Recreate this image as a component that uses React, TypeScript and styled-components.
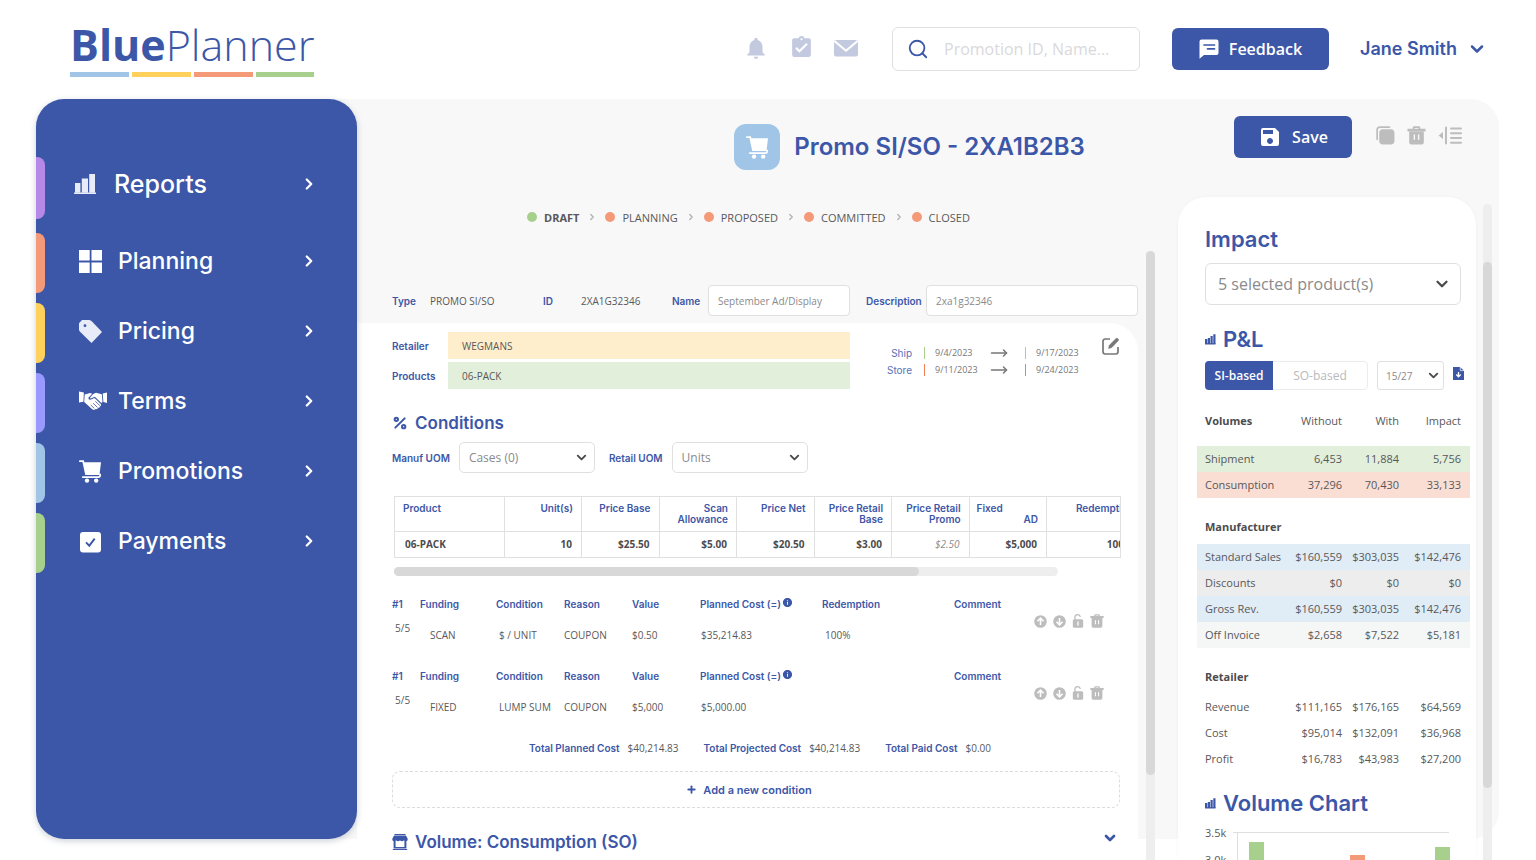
import React from "react";
import styled, { createGlobalStyle, css } from "styled-components";
import { ChevronDown, ChevronRight, MoveRight, Percent, Plus, Search } from "lucide-react";
import { MdAssignmentTurnedIn, MdInfo, MdNotifications, MdSave } from "react-icons/md";

const blue = "#3c57a7";
const ink = "#58585a";
const soft = "#8a8a8c";
const line = "#e0e0e0";
const heading = `Inter, "Liberation Sans", sans-serif`;
const body = `"Open Sans", "Noto Sans", sans-serif`;

const GlobalStyle = createGlobalStyle`
  *, *::before, *::after { box-sizing: border-box; }
  body { margin: 0; background: #fff; color: ${ink}; font-family: ${body}; overflow: hidden; }
  button, input, select { font: inherit; color: inherit; margin: 0; }
  button { border: 0; padding: 0; background: none; cursor: pointer; }
  h1, h2, h3, p, dl, dd { margin: 0; }
  svg { display: block; flex: none; }
`;

const Page = styled.div`
  display: flex;
  flex-direction: column;
  height: 100vh;
`;

/* ---------- header ---------- */

const Header = styled.header`
  display: flex;
  align-items: center;
  flex: none;
  height: 99px;
  padding: 0 49px 2px 70px;
`;

const Logo = styled.a`
  display: block;
  margin: 2px auto 0 0;
  color: ${blue};
  text-decoration: none;
  font-size: 43px;
  line-height: 46px;
  font-weight: 300;
  b { font-weight: 700; }
`;

const LogoBars = styled.span`
  display: grid;
  grid-template-columns: repeat(4, 1fr);
  gap: 3px;
  height: 5px;
  margin-top: 4px;
`;

const LogoBar = styled.span<{ $color: string }>`
  background: ${(p) => p.$color};
`;

const HeaderIcons = styled.nav`
  display: flex;
  align-items: center;
  gap: 20px;
  margin-right: 34px;
  padding-bottom: 2px;
  color: #c3cadf;
`;

const IconButton = styled.button`
  display: flex;
  align-items: center;
  justify-content: center;
  flex: none;
  color: inherit;
`;

const SearchBox = styled.label`
  display: flex;
  align-items: center;
  gap: 15px;
  width: 248px;
  height: 44px;
  margin-right: 32px;
  padding: 0 14px;
  border: 1px solid ${line};
  border-radius: 6px;
  color: ${blue};
  input {
    width: 100%;
    min-width: 0;
    border: 0;
    padding: 0;
    outline: 0;
    font-size: 16px;
    font-weight: 500;
  }
  input::placeholder { color: #d9d9db; opacity: 1; }
`;

const PrimaryButton = styled.button<{ $width: number }>`
  display: flex;
  align-items: center;
  justify-content: center;
  gap: 10px;
  width: ${(p) => p.$width}px;
  height: 42px;
  border-radius: 6px;
  background: ${blue};
  color: #fff;
  font-size: 16px;
  font-weight: 600;
`;

const UserButton = styled.button`
  display: flex;
  align-items: center;
  gap: 10px;
  margin-left: 31px;
  color: ${blue};
  font-family: ${heading};
  font-size: 18px;
  font-weight: 600;
`;

/* ---------- shell ---------- */

const Shell = styled.div`
  display: flex;
  flex: 1;
  min-height: 0;
  padding: 0 37px 0 36px;
`;

const Sidebar = styled.nav`
  position: relative;
  z-index: 1;
  flex: none;
  width: 321px;
  margin: 0 -28px 21px 0;
  padding-top: 58px;
  border-radius: 28px;
  background: ${blue};
  box-shadow: 0 2px 6px rgba(60, 70, 100, 0.25);
`;

const NavItem = styled.a<{ $tab: string; $lead?: boolean }>`
  position: relative;
  display: grid;
  grid-template-columns: ${(p) => (p.$lead ? 40 : 39)}px 1fr 18px;
  align-items: center;
  height: ${(p) => (p.$lead ? 62 : 60)}px;
  margin-bottom: ${(p) => (p.$lead ? 14 : 10)}px;
  padding: 0 39px ${(p) => (p.$lead ? 8 : 4)}px ${(p) => (p.$lead ? 38 : 43)}px;
  color: #fff;
  text-decoration: none;
  font-family: ${heading};
  font-size: ${(p) => (p.$lead ? 25 : 23)}px;
  font-weight: 500;
  &::before {
    content: "";
    position: absolute;
    inset: 0 auto 0 0;
    width: 9px;
    border-radius: 0 8px 8px 0;
    background: ${(p) => p.$tab};
  }
`;

const Workspace = styled.main`
  position: relative;
  display: flex;
  flex-direction: column;
  flex: 1;
  min-width: 0;
  padding-left: 28px;
  &::before {
    content: "";
    position: absolute;
    inset: 0 0 21px 0;
    z-index: -1;
    border-radius: 0 28px 28px 0;
    background: #f8f8f8;
  }
`;

const TitleBar = styled.div`
  display: grid;
  grid-template-columns: 1fr auto 1fr;
  align-items: start;
  flex: none;
  height: 98px;
  padding: 17px 37px 0 0;
`;

const Title = styled.h1`
  display: flex;
  grid-column: 2;
  align-items: center;
  gap: 14px;
  margin-top: 8px;
  color: ${blue};
  font-family: ${heading};
  font-size: 24px;
  font-weight: 600;
  line-height: 46px;
`;

const TitleBadge = styled.span`
  display: flex;
  align-items: center;
  justify-content: center;
  width: 46px;
  height: 46px;
  border-radius: 12px;
  background: #a0c5e6;
  color: #fff;
`;

const Actions = styled.div`
  display: flex;
  justify-content: flex-end;
  gap: 13px;
  color: #bdbdbd;
`;

const ActionIcons = styled.div`
  display: flex;
  align-items: center;
  gap: 12px;
  height: 38px;
  margin-left: 11px;
`;

const Columns = styled.div`
  display: flex;
  flex: 1;
  min-height: 0;
  padding-right: 7px;
`;

const Editor = styled.section`
  display: flex;
  flex-direction: column;
  flex: 1;
  min-width: 0;
  margin-right: 23px;
`;

const Steps = styled.ol`
  display: flex;
  align-items: center;
  justify-content: center;
  flex: none;
  gap: 8px;
  height: 40px;
  margin: 0 15px 14px 0;
  padding: 0;
  list-style: none;
  color: #b0b0b0;
`;

const Step = styled.li<{ $current?: boolean }>`
  display: flex;
  align-items: center;
  gap: 7px;
  color: ${ink};
  font-size: 11px;
  font-weight: ${(p) => (p.$current ? 700 : 400)};
  &::before {
    content: "";
    width: 10px;
    height: 10px;
    border-radius: 50%;
    background: ${(p) => (p.$current ? "#a7d08c" : "#f59a78")};
  }
`;

const ScrollPane = styled.div`
  display: flex;
  flex: 1;
  min-height: 0;
  gap: 8px;
`;

const ScrollContent = styled.div`
  flex: 1;
  min-width: 0;
  overflow: hidden;
`;

const Track = styled.div<{ $from: string; $size: string; $top?: number }>`
  flex: none;
  width: 9px;
  margin-top: ${(p) => p.$top ?? 0}px;
  padding-top: ${(p) => p.$from};
  border-radius: 5px 5px 0 0;
  background: #eee;
  &::before {
    content: "";
    display: block;
    height: ${(p) => p.$size};
    border-radius: 5px;
    background: #d8d8d8;
  }
`;

/* ---------- promotion form ---------- */

const labelText = css`
  color: ${blue};
  font-family: ${heading};
  font-size: 10px;
  font-weight: 600;
  line-height: 14px;
  white-space: nowrap;
`;

const FieldRow = styled.div`
  display: grid;
  grid-template-columns: 151px 129px 194px 1fr;
  align-items: center;
  height: 65px;
  padding: 34px 0 0 35px;
`;

const Field = styled.label<{ $label: number; $end?: number }>`
  display: grid;
  grid-template-columns: ${(p) => p.$label}px 1fr;
  align-items: center;
  padding-right: ${(p) => p.$end ?? 0}px;
  font-size: 10px;
  span { ${labelText} }
`;

const TextInput = styled.input`
  width: 100%;
  min-width: 0;
  height: 31px;
  padding: 0 9px;
  border: 1px solid ${line};
  border-radius: 4px;
  background: #fff;
  && { color: ${soft}; }
  font-size: 10px;
`;

const Card = styled.div`
  margin-top: 7px;
  padding: 9px 18px 0 35px;
  border-radius: 0 28px 0 0;
  background: #fff;
`;

const Summary = styled.div`
  display: flex;
  align-items: flex-start;
`;

const Scope = styled.dl`
  display: grid;
  grid-template-columns: 56px 1fr;
  grid-auto-rows: 27px;
  row-gap: 3px;
  align-items: center;
  flex: 1;
  max-width: 458px;
  dt { ${labelText} }
`;

const ScopeValue = styled.dd<{ $fill: string }>`
  height: 27px;
  padding-left: 14px;
  background: ${(p) => p.$fill};
  font-size: 10px;
  line-height: 29px;
`;

const Dates = styled.div`
  display: grid;
  grid-template-columns: 28px 54px 23px 54px;
  grid-auto-rows: 17px;
  align-items: center;
  column-gap: 12px;
  margin: 12px auto 0 34px;
  color: #77777a;
`;

const DateLabel = styled.span`
  color: #5871b8;
  font-family: ${heading};
  font-size: 10px;
  text-align: right;
`;

const DateValue = styled.span<{ $color: string }>`
  display: flex;
  align-items: center;
  gap: 10px;
  font-size: 9px;
  white-space: nowrap;
  &::before {
    content: "";
    flex: none;
    width: 1px;
    height: 12px;
    background: ${(p) => p.$color};
  }
`;

const EditButton = styled(IconButton)`
  margin: 5px 0 0;
  color: #77777a;
`;

const SectionTitle = styled.h2`
  display: flex;
  align-items: center;
  gap: 7px;
  height: 24px;
  margin-top: 22px;
  color: ${blue};
  font-family: ${heading};
  font-size: 17px;
  font-weight: 600;
  button { margin: 0 2px 8px auto; }
`;

const Units = styled.div`
  display: flex;
  align-items: center;
  margin-top: 7px;
`;

const UnitField = styled.label`
  display: flex;
  align-items: center;
  margin-right: 14px;
  gap: 9px;
  > span:first-child { ${labelText} }
`;

const SelectWrap = styled.span<{ $size: "s" | "m" | "l" }>`
  position: relative;
  display: block;
  select {
    appearance: none;
    display: block;
    width: ${(p) => ({ s: "67px", m: "136px", l: "100%" })[p.$size]};
    height: ${(p) => ({ s: 29, m: 31, l: 42 })[p.$size]}px;
    padding: 0 ${(p) => ({ s: 8, m: 9, l: 12 })[p.$size]}px;
    border: 1px solid ${line};
    border-radius: ${(p) => ({ s: 3, m: 5, l: 6 })[p.$size]}px;
    background: #fff;
    color: ${soft};
    font-size: ${(p) => ({ s: 10, m: 12, l: 16 })[p.$size]}px;
  }
  svg {
    position: absolute;
    right: ${(p) => ({ s: 3, m: 6, l: 10 })[p.$size]}px;
    top: 0;
    height: 100%;
    color: #4a4a4c;
    pointer-events: none;
  }
`;

const TableClip = styled.div`
  margin: 23px -1px 0 2px;
  border: 1px solid ${line};
  overflow: hidden;
`;

const ProductTable = styled.table`
  width: 100%;
  min-width: 748px;
  table-layout: fixed;
  border-collapse: collapse;
  th, td { border-right: 1px solid ${line}; text-align: right; padding: 0 9px; }
  th { ${labelText} height: 34px; padding: 6px 8px 0 4px; line-height: 11px; vertical-align: top; white-space: normal; }
  td { height: 26px; border-top: 1px solid ${line}; font-size: 10px; font-weight: 700; color: #4c4c4e; }
  th:first-child { text-align: left; padding-left: 8px; }
  td:first-child { text-align: left; padding-left: 10px; }
`;

const Muted = styled.i`
  color: ${soft};
  font-weight: 400;
`;

const SplitHead = styled.span`
  display: flex;
  flex-direction: column;
  span:first-child { padding-left: 3px; text-align: left; }
`;

const RowTrack = styled.div`
  width: 664px;
  max-width: 100%;
  height: 9px;
  margin: 9px 0 21px 2px;
  border-radius: 5px;
  background: #eee;
  &::before {
    content: "";
    display: block;
    width: 79%;
    height: 100%;
    border-radius: 5px;
    background: #d8d8d8;
  }
`;

const ConditionRow = styled.div`
  display: grid;
  grid-template-columns: 28px 76px 68px 68px 68px 122px 132px 80px auto;
  justify-content: start;
  height: 48px;
  margin-bottom: 24px;
`;

const Cell = styled.div<{ $indent?: number; $gap?: number }>`
  font-size: 10px;
  line-height: 18px;
  white-space: nowrap;
  h3 { ${labelText} display: flex; gap: 1px; margin-bottom: ${(p) => p.$gap ?? 15}px; }
  p { padding-left: ${(p) => p.$indent ?? 0}px; }
`;

const RowTools = styled.div`
  display: flex;
  align-items: center;
  gap: 6px;
  height: 14px;
  margin-top: 17px;
  color: #bdbdbd;
`;

const Totals = styled.dl`
  display: flex;
  height: 16px;
  margin: -1px 0 15px;
  padding-left: 137px;
  align-items: center;
  gap: 8px;
  font-size: 10px;
  dt { ${labelText} }
  dd { margin-right: 17px; }
`;

const AddButton = styled.button`
  display: flex;
  align-items: center;
  justify-content: center;
  gap: 6px;
  width: 100%;
  height: 37px;
  padding-right: 14px;
  border: 1px dashed #dcdcdc;
  border-radius: 8px;
  color: ${blue};
  font-family: ${heading};
  font-size: 11px;
  font-weight: 600;
`;

/* ---------- impact panel ---------- */

const Panel = styled.aside`
  flex: none;
  width: 298px;
  margin-right: 7px;
  padding: 28px 15px 0 27px;
  border-radius: 28px 28px 0 0;
  background: #fff;
  box-shadow: 0 0 4px rgba(0, 0, 0, 0.03);
  overflow: hidden;
`;

const PanelTitle = styled.h2<{ $top?: number; $bottom?: number }>`
  display: flex;
  align-items: center;
  gap: 7px;
  height: 28px;
  margin: ${(p) => p.$top ?? 0}px 0 ${(p) => p.$bottom ?? 0}px;
  color: ${blue};
  font-family: ${heading};
  font-size: 22px;
  font-weight: 600;
`;

const PanelControls = styled.div`
  display: flex;
  align-items: center;
  gap: 9px;
`;

const Toggle = styled.div`
  display: flex;
  flex: none;
  width: 163px;
  height: 29px;
  border: 1px solid #ececec;
  border-radius: 4px;
`;

const ToggleButton = styled.button<{ $on?: boolean }>`
  flex: 1;
  font-size: 12px;
  color: #b9b9bb;
  ${(p) =>
    p.$on &&
    css`
      flex: none;
      width: 68px;
      margin: -1px 0 -1px -1px;
      border-radius: 4px 0 0 4px;
      background: ${blue};
      color: #fff;
      font-weight: 600;
    `}
`;

const ImpactTable = styled.table`
  width: calc(100% + 17px);
  margin: 18px -9px 0 -8px;
  border-collapse: collapse;
  table-layout: fixed;
  font-size: 11px;
  line-height: 18px;
  th, td { height: 26px; padding: 0 9px 0 0; text-align: right; font-weight: 400; white-space: nowrap; }
  th:first-child { padding-left: 8px; text-align: left; }
  thead th { height: 38px; padding-top: 4px; vertical-align: top; }
  th[scope="rowgroup"] { height: 46px; padding-bottom: 8px; vertical-align: bottom; }
  th[scope="rowgroup"], thead th:first-child { color: #4c4c4e; font-weight: 700; }
`;

const ImpactRow = styled.tr<{ $fill?: string }>`
  background: ${(p) => p.$fill ?? "transparent"};
`;

/* ---------- icons ---------- */

const Bars = () => (
  <svg width="22" height="20" viewBox="0 0 22 20" fill="#e8ecf8">
    <path d="M1 9h5.400v9.700H1zM7.800 4.400H14v14.300H7.800zM15.200 0H21v18.700h-5.800z" />
    <path d="M0 18.500h22V20H0z" />
  </svg>
);

const MiniBars = () => (
  <svg width="11" height="11" viewBox="0 0 11 11" fill="currentColor">
    <path d="M0 5h2.300v5H0zM2.800 4H5v6H2.800zM5.500 2h2.200v8H5.500zM8.300.3h2.200V10H8.300z" />
    <path d="M0 9.200h10.500v1.300H0z" />
  </svg>
);

const Squares = () => (
  <svg width="23" height="23" viewBox="0 0 23 23" fill="currentColor">
    <path d="M0 0h10.700v10.500H0zM12.500 0H23v10.500H12.500zM0 12.500h10.700V23H0zM12.500 12.500H23V23H12.500z" />
  </svg>
);

const Tag = () => (
  <svg width="23" height="23" viewBox="0 0 23 23" fill="#e8ecf8" fillRule="evenodd">
    <path d="M3 0h7.500L12.500 1 23 12 12.500 23 .8 11.500 0 10V3.200zM6 4.300a1.400 1.400 0 1 0 0 2.800 1.400 1.400 0 0 0 0-2.800z" />
  </svg>
);

const Handshake = () => (
  <svg width="28" height="20" viewBox="0 0 28 20" fill="currentColor">
    <path d="M0 .6l4.900 1-.5 9.200L0 11.600zM28 1.600l-4.300 1 .7 8.400 3.600 1z" />
    <path d="M5.700 3.600L11 2l2.200.7-3.800 4.100q-.3 2.300 2.600 1.800l3.500-1.500 6.300 6q1 1.700-.7 2.100 0 1.500-1.900 1.500-.6 1.900-2.700 1.300-1.200 1.500-3 .4L8 13.500l-2.800-2.600z" />
    <path d="M14.200 2.900L17 1.800l5.800 1.500.7 7.800-1.200.9-6.500-6.300-4 1.700q-1 0-.7-1z" />
    <path d="M14 12.200l4.500 4.200M16.300 10.300l4.800 4.500M11.800 14l3.500 3.400" stroke={blue} strokeWidth=".8" />
  </svg>
);

const Cart = () => (
  <svg width="23" height="23" viewBox="0 0 23 23" fill="currentColor">
    <path d="M4.500 2.200H22l-1.300 10.600-1 1.200H7z" />
    <path d="M.9 1.200h3.300L7 14h12.500q2 0 1.700 1.600t-2 1.500H3.800" fill="none" stroke="currentColor" strokeWidth="1.800" strokeLinecap="round" />
    <circle cx="8" cy="20.600" r="2.200" />
    <circle cx="17.200" cy="20.600" r="2.200" />
  </svg>
);

const CheckSquare = () => (
  <svg width="23" height="23" viewBox="0 0 23 23">
    <rect x="1" y="2" width="21" height="20.500" rx="3" fill="#fff" />
    <path d="M7 12.300l3.300 3.400 5.400-7" fill="none" stroke={blue} strokeWidth="1.900" />
  </svg>
);

const Mail = () => (
  <svg width="24" height="18" viewBox="0 0 24 18">
    <rect y="1" width="24" height="16.500" rx="2" fill="currentColor" />
    <path d="M.5 2l11.500 9.700L23.500 2" fill="none" stroke="#fff" strokeWidth="2" />
  </svg>
);

const Chat = () => (
  <svg width="20" height="20" viewBox="0 0 20 20">
    <path d="M2.500.5h15a2 2 0 0 1 2 2v11.500a2 2 0 0 1-2 2H5L.5 19.700V2.500a2 2 0 0 1 2-2z" fill="#fff" />
    <path d="M5 6h10.500M8.500 9.800h7" stroke={blue} strokeWidth="1.700" strokeLinecap="round" />
  </svg>
);

const Copy = () => (
  <svg width="19" height="19" viewBox="0 0 20 20">
    <path d="M1.200 14V4a3 3 0 0 1 3-2.900h10" fill="none" stroke="currentColor" strokeWidth="1.800" strokeLinecap="round" />
    <rect x="3.400" y="3.400" width="16" height="16" rx="4" fill="currentColor" />
  </svg>
);

const Trash = ({ size }: { size: number }) => (
  <svg width={size} height={size} viewBox="0 0 20 20" fill="currentColor" fillRule="evenodd">
    <path d="M6 3V1.500Q6 .2 7.500.2h5Q14 .2 14 1.500V3h5.500v2.800H.5V3zM8 3h4V2H8z" />
    <path d="M2.300 5.800h15.400v11.400q0 2.300-2.200 2.300h-11q-2.200 0-2.200-2.300zM7 9v5.500h1.500V9zM11.500 9v5.500H13V9z" />
  </svg>
);

const Outdent = () => (
  <svg width="24" height="19" viewBox="0 0 24 19" stroke="currentColor" strokeWidth="2" strokeLinecap="round" fill="none">
    <path d="M8 1.500v16M13 2.500h10M13 7.300h10M13 12h10M13 16.800h10" />
    <path d="M4.200 7.500L1.800 9.500l2.400 2z" fill="currentColor" strokeWidth="1.500" />
  </svg>
);

const Edit = () => (
  <svg width="18" height="18" viewBox="0 0 18 18" fill="none" stroke="currentColor">
    <path d="M8 2H3.200A2.200 2.200 0 0 0 1 4.200v10.600A2.200 2.200 0 0 0 3.200 17h10.600a2.200 2.200 0 0 0 2.200-2.200V10" strokeWidth="1.700" />
    <path d="M6.500 11.500l.8-3.300L14 1.500q1-.8 2 .2t.2 2L9.800 10.600z" fill="currentColor" strokeWidth=".5" />
  </svg>
);

const Store = () => (
  <svg width="16" height="16" viewBox="0 0 16 16" fill="currentColor" fillRule="evenodd">
    <path d="M2.500 0h11v1h-11zM2 1.500h12L15.800 5q0 2.300-1.900 2.300-1.500 0-2-1.100-.6 1.100-1.900 1.100-1.400 0-2-1.100-.6 1.100-2 1.100-1.300 0-1.900-1.100-.5 1.100-2 1.100Q.2 7.300.2 5z" />
    <path d="M1.600 7h2v6h8.800V7h2v7.500H1.600zM.8 15h14.400v1H.8z" />
  </svg>
);

const Download = () => (
  <svg width="11" height="17" viewBox="0 0 11 17">
    <path d="M0 0h7l4 3.800V13H0z" fill={blue} />
    <path d="M7.300 0v3.600H11" fill="none" stroke="#fff" strokeWidth=".7" />
    <path d="M5.500 5v4.500M3.300 7.500l2.200 2.300 2.200-2.300" fill="none" stroke="#fff" strokeWidth="1.300" />
  </svg>
);

const ArrowCircle = ({ down }: { down?: boolean }) => (
  <svg width="13" height="13" viewBox="0 0 13 13">
    <circle cx="6.500" cy="6.500" r="6.300" fill="currentColor" />
    <path
      d={down ? "M6.500 3v6.500M3.400 6.800l3.100 3.100 3.100-3.100" : "M6.500 10V3.500M3.400 6.200l3.100-3.100 3.100 3.100"}
      fill="none"
      stroke="#fff"
      strokeWidth="1.600"
    />
  </svg>
);

const Unlock = () => (
  <svg width="12" height="14" viewBox="0 0 12 14">
    <path d="M3 6V3.500a2.600 2.600 0 0 1 5.200-.5" fill="none" stroke="currentColor" strokeWidth="1.300" />
    <rect x=".8" y="5.200" width="10.400" height="8.500" rx="1.500" fill="currentColor" />
    <path d="M6 8v3" stroke="#fff" strokeWidth="1.300" strokeLinecap="round" />
  </svg>
);

/* ---------- data ---------- */

const navItems = [
  { label: "Reports", tab: "#b689e8", icon: <Bars />, lead: true },
  { label: "Planning", tab: "#f59a78", icon: <Squares /> },
  { label: "Pricing", tab: "#ffd05c", icon: <Tag /> },
  { label: "Terms", tab: "#9a99ff", icon: <Handshake /> },
  { label: "Promotions", tab: "#a0c5e6", icon: <Cart /> },
  { label: "Payments", tab: "#a7d08c", icon: <CheckSquare /> },
];

const steps = ["DRAFT", "PLANNING", "PROPOSED", "COMMITTED", "CLOSED"];

const conditions = [
  { funding: "SCAN", condition: "$ / UNIT", value: "$0.50", cost: "$35,214.83", redemption: "100%" },
  { funding: "FIXED", condition: "LUMP SUM", value: "$5,000", cost: "$5,000.00" },
];

const totals = [
  ["Total Planned Cost", "$40,214.83"],
  ["Total Projected Cost", "$40,214.83"],
  ["Total Paid Cost", "$0.00"],
];

type ImpactGroup = { name?: string; rows: { cells: string[]; fill?: string }[] };

const impactGroups: ImpactGroup[] = [
  {
    rows: [
      { cells: ["Shipment", "6,453", "11,884", "5,756"], fill: "#e2efda" },
      { cells: ["Consumption", "37,296", "70,430", "33,133"], fill: "#fbded3" },
    ],
  },
  {
    name: "Manufacturer",
    rows: [
      { cells: ["Standard Sales", "$160,559", "$303,035", "$142,476"], fill: "#e0ecf6" },
      { cells: ["Discounts", "$0", "$0", "$0"], fill: "#ededed" },
      { cells: ["Gross Rev.", "$160,559", "$303,035", "$142,476"], fill: "#e0ecf6" },
      { cells: ["Off Invoice", "$2,658", "$7,522", "$5,181"], fill: "#f5f6f6" },
    ],
  },
  {
    name: "Retailer",
    rows: [
      { cells: ["Revenue", "$111,165", "$176,165", "$64,569"] },
      { cells: ["Cost", "$95,014", "$132,091", "$36,968"] },
      { cells: ["Profit", "$16,783", "$43,983", "$27,200"] },
    ],
  },
];

/* ---------- parts ---------- */

function Select({ size, options, label }: { size: "s" | "m" | "l"; options: string[]; label?: string }) {
  return (
    <SelectWrap $size={size}>
      <select aria-label={label}>
        {options.map((o) => (
          <option key={o}>{o}</option>
        ))}
      </select>
      <ChevronDown size={size === "l" ? 18 : 15} strokeWidth={3} />
    </SelectWrap>
  );
}

function DateRow({ label, from, to, color }: { label: string; from: string; to: string; color: string }) {
  return (
    <>
      <DateLabel>{label}</DateLabel>
      <DateValue $color={color}>{from}</DateValue>
      <MoveRight size={18} strokeWidth={2} />
      <DateValue $color={color}>{to}</DateValue>
    </>
  );
}

function Condition({ item }: { item: (typeof conditions)[number] }) {
  return (
    <ConditionRow>
      <Cell $gap={8} $indent={3}><h3>#1</h3><p>5/5</p></Cell>
      <Cell $indent={10}><h3>Funding</h3><p>{item.funding}</p></Cell>
      <Cell $indent={3}><h3>Condition</h3><p>{item.condition}</p></Cell>
      <Cell><h3>Reason</h3><p>COUPON</p></Cell>
      <Cell><h3>Value</h3><p>{item.value}</p></Cell>
      <Cell $indent={1}><h3>Planned Cost (=) <MdInfo size={11} /></h3><p>{item.cost}</p></Cell>
      <Cell $indent={3}>{item.redemption && <><h3>Redemption</h3><p>{item.redemption}</p></>}</Cell>
      <Cell><h3>Comment</h3></Cell>
      <RowTools>
        <IconButton aria-label="Move up"><ArrowCircle /></IconButton>
        <IconButton aria-label="Move down"><ArrowCircle down /></IconButton>
        <IconButton aria-label="Unlock"><Unlock /></IconButton>
        <IconButton aria-label="Delete"><Trash size={14} /></IconButton>
      </RowTools>
    </ConditionRow>
  );
}

function VolumeChart() {
  return (
    <svg width="256" height="120" viewBox="0 0 256 120" role="img" aria-label="Volume chart">
      <g fill={ink} fontSize="11" fontFamily={body}>
        <text x="0" y="15">3.5k</text>
        <text x="0" y="42">3.0k</text>
      </g>
      <path d="M28 10.500H244M32.500 10v110" stroke="#dedede" />
      <path d="M44 20h15v100H44zM230 25h15v95h-15z" fill="#a7d08c" />
      <path d="M145 33h15v87h-15z" fill="#f59a78" />
    </svg>
  );
}

export default function App() {
  return (
    <Page>
      <GlobalStyle />
      <Header>
        <Logo href="#">
          <b>Blue</b>Planner
          <LogoBars>
            {["#a0c5e6", "#ffd05c", "#f59a78", "#a7d08c"].map((c) => (
              <LogoBar key={c} $color={c} />
            ))}
          </LogoBars>
        </Logo>
        <HeaderIcons aria-label="Notifications">
          <IconButton aria-label="Alerts"><MdNotifications size={26} /></IconButton>
          <IconButton aria-label="Tasks"><MdAssignmentTurnedIn size={25} /></IconButton>
          <IconButton aria-label="Messages"><Mail /></IconButton>
        </HeaderIcons>
        <SearchBox>
          <Search size={22} />
          <input type="search" aria-label="Search promotions" placeholder="Promotion ID, Name..." />
        </SearchBox>
        <PrimaryButton $width={157}><Chat />Feedback</PrimaryButton>
        <UserButton>Jane Smith<ChevronDown size={20} strokeWidth={3} /></UserButton>
      </Header>

      <Shell>
        <Sidebar>
          {navItems.map((n) => (
            <NavItem key={n.label} href="#" $tab={n.tab} $lead={n.lead}>
              {n.icon}
              {n.label}
              <ChevronRight size={18} strokeWidth={3} />
            </NavItem>
          ))}
        </Sidebar>

        <Workspace>
          <TitleBar>
            <Title>
              <TitleBadge><Cart /></TitleBadge>
              Promo SI/SO - 2XA1B2B3
            </Title>
            <Actions>
              <PrimaryButton $width={118}><MdSave size={24} />Save</PrimaryButton>
              <ActionIcons>
                <IconButton aria-label="Duplicate"><Copy /></IconButton>
                <IconButton aria-label="Delete promotion"><Trash size={19} /></IconButton>
                <IconButton aria-label="Collapse panel"><Outdent /></IconButton>
              </ActionIcons>
            </Actions>
          </TitleBar>

          <Columns>
            <Editor>
              <Steps>
                {steps.map((s, i) => (
                  <React.Fragment key={s}>
                    {i > 0 && <ChevronRight size={10} strokeWidth={3} />}
                    <Step $current={i === 0}>{s}</Step>
                  </React.Fragment>
                ))}
              </Steps>
              <ScrollPane>
                <ScrollContent>
                  <FieldRow>
                    <Field as="div" $label={38}><span>Type</span>PROMO SI/SO</Field>
                    <Field as="div" $label={38}><span>ID</span>2XA1G32346</Field>
                    <Field $label={36} $end={16}><span>Name</span><TextInput defaultValue="September Ad/Display" /></Field>
                    <Field $label={60}><span>Description</span><TextInput defaultValue="2xa1g32346" /></Field>
                  </FieldRow>
                  <Card>
                    <Summary>
                      <Scope>
                        <dt>Retailer</dt>
                        <ScopeValue $fill="#ffeecb">WEGMANS</ScopeValue>
                        <dt>Products</dt>
                        <ScopeValue $fill="#e2efda">06-PACK</ScopeValue>
                      </Scope>
                      <Dates>
                        <DateRow label="Ship" from="9/4/2023" to="9/17/2023" color="#a7d08c" />
                        <DateRow label="Store" from="9/11/2023" to="9/24/2023" color="#f07f55" />
                      </Dates>
                      <EditButton aria-label="Edit"><Edit /></EditButton>
                    </Summary>

                    <SectionTitle><Percent size={16} strokeWidth={3} />Conditions</SectionTitle>
                    <Units>
                      <UnitField><span>Manuf UOM</span><Select size="m" options={["Cases (0)"]} /></UnitField>
                      <UnitField><span>Retail UOM</span><Select size="m" options={["Units"]} /></UnitField>
                    </Units>

                    <TableClip>
                      <ProductTable>
                        <colgroup>
                          <col style={{ width: 109 }} />
                          {Array.from({ length: 7 }, (_, i) => <col key={i} />)}
                          <col style={{ width: 96 }} />
                        </colgroup>
                        <thead>
                          <tr>
                            <th>Product</th>
                            <th>Unit(s)</th>
                            <th>Price Base</th>
                            <th>Scan Allowance</th>
                            <th>Price Net</th>
                            <th>Price Retail Base</th>
                            <th>Price Retail Promo</th>
                            <th><SplitHead><span>Fixed</span><span>AD</span></SplitHead></th>
                            <th>Redemption</th>
                          </tr>
                        </thead>
                        <tbody>
                          <tr>
                            <td>06-PACK</td>
                            <td>10</td>
                            <td>$25.50</td>
                            <td>$5.00</td>
                            <td>$20.50</td>
                            <td>$3.00</td>
                            <td><Muted>$2.50</Muted></td>
                            <td>$5,000</td>
                            <td>100%</td>
                          </tr>
                        </tbody>
                      </ProductTable>
                    </TableClip>
                    <RowTrack />

                    {conditions.map((c) => <Condition key={c.funding} item={c} />)}

                    <Totals>
                      {totals.map(([label, value]) => (
                        <React.Fragment key={label}>
                          <dt>{label}</dt>
                          <dd>{value}</dd>
                        </React.Fragment>
                      ))}
                    </Totals>
                    <AddButton><Plus size={11} strokeWidth={4} />Add a new condition</AddButton>

                    <SectionTitle>
                      <Store />Volume: Consumption (SO)
                      <IconButton aria-label="Expand volume"><ChevronDown size={16} strokeWidth={4} /></IconButton>
                    </SectionTitle>
                  </Card>
                </ScrollContent>
                <Track $from="0" $size="86%" />
              </ScrollPane>
            </Editor>

            <Panel>
              <PanelTitle $bottom={10}>Impact</PanelTitle>
              <Select size="l" label="Products" options={["5 selected product(s)"]} />
              <PanelTitle $top={20} $bottom={8}><MiniBars />P&amp;L</PanelTitle>
              <PanelControls>
                <Toggle>
                  <ToggleButton $on>SI-based</ToggleButton>
                  <ToggleButton>SO-based</ToggleButton>
                </Toggle>
                <Select size="s" label="Weeks" options={["15/27"]} />
                <IconButton aria-label="Download"><Download /></IconButton>
              </PanelControls>
              <ImpactTable>
                <colgroup>
                  <col style={{ width: 88 }} />
                  <col style={{ width: 66 }} />
                  <col style={{ width: 57 }} />
                  <col />
                </colgroup>
                <thead>
                  <tr><th>Volumes</th><th>Without</th><th>With</th><th>Impact</th></tr>
                </thead>
                {impactGroups.map((g, i) => (
                  <tbody key={i}>
                    {g.name && <tr><th scope="rowgroup" colSpan={4}>{g.name}</th></tr>}
                    {g.rows.map(({ cells: [name, ...values], fill }) => (
                      <ImpactRow key={name} $fill={fill}>
                        <th scope="row">{name}</th>
                        {values.map((v, k) => <td key={k}>{v}</td>)}
                      </ImpactRow>
                    ))}
                  </tbody>
                ))}
              </ImpactTable>
              <PanelTitle $top={17} $bottom={5}><MiniBars />Volume Chart</PanelTitle>
              <VolumeChart />
            </Panel>
            <Track $top={7} $from="58px" $size="88%" />
          </Columns>
        </Workspace>
      </Shell>
    </Page>
  );
}
